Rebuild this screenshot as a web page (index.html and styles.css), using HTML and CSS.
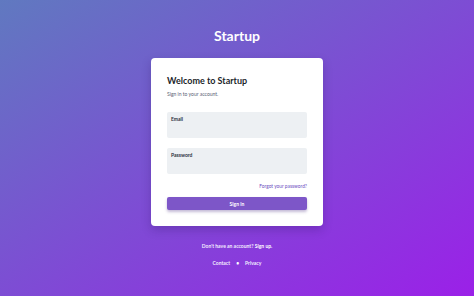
FILE: index.html
```html
<!DOCTYPE html>
<html>
<head>
<meta charset="utf-8">
<link rel="stylesheet" href="styles.css">
</head>
<body>
<main class="page">
  <h1 class="brand">Startup</h1>
  <section class="card">
    <h2 class="card-title">Welcome to Startup</h2>
    <p class="card-sub">Sign in to your account.</p>
    <form class="form">
      <label class="field"><span class="field-label">Email</span></label>
      <label class="field"><span class="field-label">Password</span></label>
      <a class="forgot" href="#">Forgot your password?</a>
      <button class="btn" type="button">Sign in</button>
    </form>
  </section>
  <p class="signup">Don't have an account? <a href="#">Sign up.</a></p>
  <nav class="links"><a href="#">Contact</a><span class="dot">•</span><a href="#">Privacy</a></nav>
</main>
</body>
</html>
```
FILE: styles.css
```css
html, body { margin: 0; padding: 0; }
body {
  width: 474px;
  height: 296px;
  overflow: hidden;
  font-family: Lato, "Open Sans", sans-serif;
  background: linear-gradient(to bottom right, #6079c0, #9b20e8);
  color: #fff;
}
.page {
  display: flex;
  flex-direction: column;
  align-items: center;
  padding-top: 26px;
}
.brand {
  margin: 0;
  font-size: 14px;
  font-weight: 700;
  line-height: 20px;
}
.card {
  margin-top: 12px;
  width: 140px;
  padding: 17px 16px 16px;
  background: #fff;
  border-radius: 4px;
  box-shadow: 0 4px 10px rgba(40, 20, 90, 0.25);
  color: #1c1f2a;
}
.card-title {
  margin: 0;
  font-size: 9px;
  font-weight: 700;
  line-height: 12px;
}
.card-sub {
  margin: 3px 0 0;
  font-size: 5px;
  line-height: 8px;
  color: #5a6275;
}
.form {
  display: flex;
  flex-direction: column;
  margin-top: 14px;
}
.field {
  display: block;
  height: 26px;
  background: #edf0f3;
  border-radius: 2px;
  padding: 4px 4px 0;
  box-sizing: border-box;
  margin-bottom: 10px;
}
.field-label {
  display: block;
  font-size: 5px;
  font-weight: 700;
  line-height: 7px;
  color: #2a2f3b;
}
.forgot {
  align-self: flex-end;
  font-size: 4.8px;
  line-height: 8px;
  color: #6b4bc0;
  text-decoration: none;
  margin-top: -2px;
}
.btn {
  margin-top: 7px;
  height: 13px;
  border: 0;
  border-radius: 2px;
  background: #7d56c8;
  color: #fff;
  font-family: inherit;
  font-size: 5px;
  font-weight: 700;
  padding: 0;
  box-shadow: 0 2px 3px rgba(60, 30, 120, 0.3);
}
.signup {
  margin: 16px 0 0;
  font-size: 5px;
  line-height: 8px;
  font-weight: 700;
  color: #f2ecff;
}
.signup a { color: #fff; text-decoration: none; }
.links {
  display: flex;
  align-items: center;
  gap: 6px;
  margin-top: 9px;
  font-size: 5px;
  line-height: 8px;
  font-weight: 700;
}
.links a { color: #f2ecff; text-decoration: none; }
.dot { font-size: 5px; }
```
